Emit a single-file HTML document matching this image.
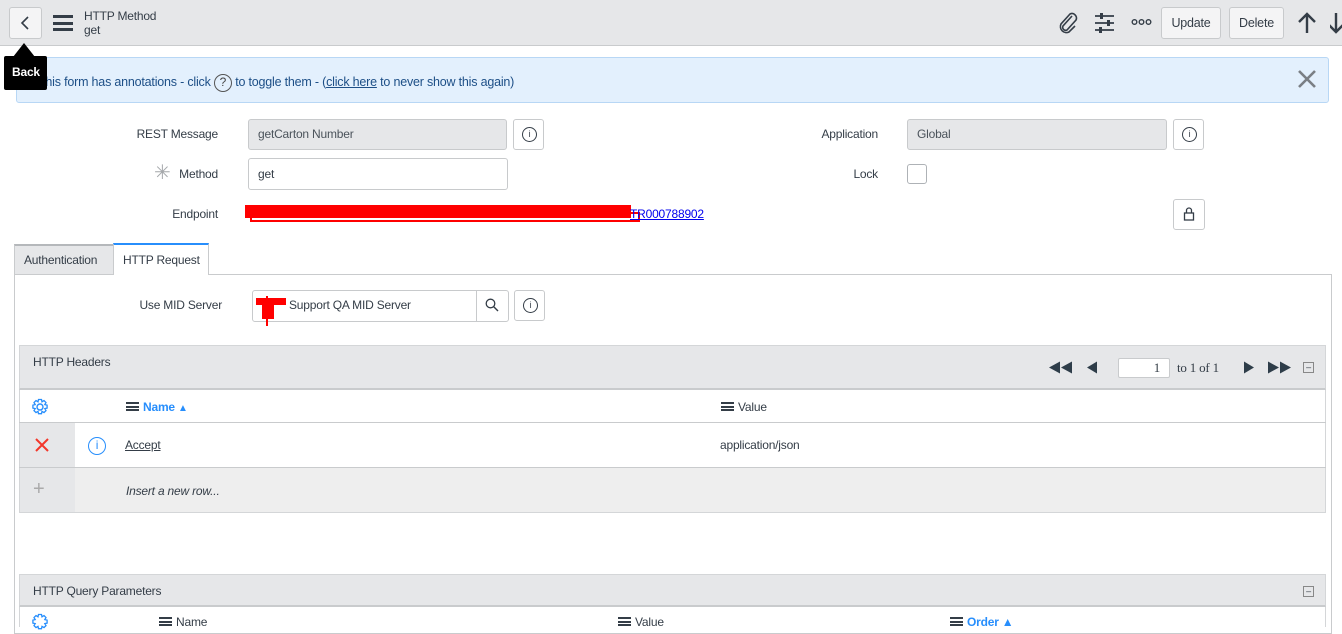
<!DOCTYPE html>
<html><head><meta charset="utf-8">
<style>
*{box-sizing:border-box;margin:0;padding:0}
body{width:1342px;height:622px;overflow:hidden;background:#fff;font-family:"Liberation Sans",sans-serif;font-size:12px;color:#343d47;position:relative;letter-spacing:-0.2px}
.a{position:absolute}
.btn{position:absolute;border:1px solid #c8cacc;border-radius:3px;background:#f4f4f5}
.inp{position:absolute;border:1px solid #c8cacc;border-radius:3px;background:#fff;padding:0 9px;line-height:29px}
.ro{background:#e6e7e9}
.lbl{position:absolute;text-align:right;color:#343d47}
.info{position:absolute;width:31px;height:31px;border:1px solid #c8cacc;border-radius:3px;background:#fff}
.info::after{content:"i";position:absolute;left:8px;top:7px;width:13px;height:13px;border:1px solid #343d47;border-radius:50%;font-size:9px;line-height:12px;text-align:center}
.ham{position:absolute;width:13px;height:9px;border-top:2px solid #343d47;border-bottom:2px solid #343d47}
.ham::after{content:"";position:absolute;left:0;right:0;top:1.5px;height:2px;background:#343d47}
</style></head><body>
<!-- header -->
<div class="a" style="left:0;top:0;width:1342px;height:46px;background:#e6e7e9;border-bottom:1px solid #c9cbcd"></div>
<div class="btn" style="left:9px;top:7px;width:33px;height:32px;background:#f4f4f5"></div>
<svg class="a" style="left:19px;top:15px" width="12" height="16"><path d="M9 2 L3 8 L9 14" stroke="#343d47" stroke-width="1.6" fill="none"/></svg>
<div class="a" style="left:53px;top:15px;width:20px;height:16px;border-top:3px solid #343d47;border-bottom:3px solid #343d47"></div>
<div class="a" style="left:53px;top:21.5px;width:20px;height:3px;background:#343d47"></div>
<div class="a" style="left:84px;top:9px;line-height:14px">HTTP Method<br>get</div>
<svg class="a" style="left:1057px;top:11px" width="22" height="24"><path d="M15 5 L6 15 a3 3 0 0 0 4 4 L19 9 a4.5 4.5 0 0 0 -6 -6 L4 13 a6 6 0 0 0 8 8 l6 -6" stroke="#343d47" stroke-width="1.6" fill="none"/></svg>
<svg class="a" style="left:1094px;top:12px" width="22" height="22"><g stroke="#343d47" stroke-width="1.8"><line x1="1" y1="4" x2="20" y2="4"/><line x1="1" y1="11" x2="20" y2="11"/><line x1="1" y1="18" x2="20" y2="18"/></g><g fill="#343d47"><rect x="6" y="1" width="3" height="6"/><rect x="13" y="8" width="3" height="6"/><rect x="5" y="15" width="3" height="6"/></g></svg>
<svg class="a" style="left:1131px;top:18px" width="22" height="8"><g fill="none" stroke="#343d47" stroke-width="1.4"><circle cx="3.5" cy="4" r="2.3"/><circle cx="10.5" cy="4" r="2.3"/><circle cx="17.5" cy="4" r="2.3"/></g></svg>
<div class="btn" style="left:1161px;top:7px;width:60px;height:32px;text-align:center;line-height:30px;font-size:12.5px">Update</div>
<div class="btn" style="left:1229px;top:7px;width:55px;height:32px;text-align:center;line-height:30px;font-size:12.5px">Delete</div>
<svg class="a" style="left:1297px;top:11px" width="20" height="24"><path d="M10 22 V3 M2 11 L10 3 L18 11" stroke="#343d47" stroke-width="2.4" fill="none"/></svg>
<svg class="a" style="left:1330px;top:11px" width="12" height="24"><path d="M6 2 V21 M-2 13 L6 21 L14 13" stroke="#343d47" stroke-width="2.4" fill="none"/></svg>
<!-- annotation -->
<div class="a" style="left:16px;top:57px;width:1313px;height:46px;background:#e3f0fd;border:1px solid #b8d7f5;border-radius:3px"></div>
<div class="a" style="left:38px;top:74px;color:#1d4f87;font-size:12.5px">This form has annotations - click <span style="display:inline-block;width:18px;height:18px;border:1.5px solid #555;border-radius:50%;text-align:center;line-height:15px;color:#444;font-size:12px">?</span> to toggle them - (<u>click here</u> to never show this again)</div>
<svg class="a" style="left:1297px;top:69px" width="20" height="20"><path d="M2 2 L18 18 M18 2 L2 18" stroke="#7a7f85" stroke-width="2.6"/></svg>
<!-- tooltip -->
<div class="a" style="left:4px;top:56px;width:43px;height:34px;background:#000;border-radius:2px"></div>
<div class="a" style="left:13px;top:43px;width:0;height:0;border-left:11px solid transparent;border-right:11px solid transparent;border-bottom:14px solid #000"></div>
<div class="a" style="left:12px;top:65px;color:#fff;font-weight:bold;font-size:12px">Back</div>
<!-- form -->
<div class="lbl" style="left:100px;width:118px;top:127px">REST Message</div>
<div class="inp ro" style="left:248px;top:119px;width:259px;height:31px;color:#4b535b">getCarton Number</div>
<div class="info" style="left:513px;top:119px"></div>
<div class="lbl" style="left:760px;width:118px;top:127px">Application</div>
<div class="inp ro" style="left:907px;top:119px;width:260px;height:31px;color:#4b535b">Global</div>
<div class="info" style="left:1173px;top:119px"></div>
<div class="a" style="left:154px;top:163px;color:#a5a8ab;font-size:20px;line-height:20px">✳</div>
<div class="lbl" style="left:150px;width:68px;top:167px">Method</div>
<div class="inp" style="left:248px;top:158px;width:260px;height:32px;line-height:31px">get</div>
<div class="lbl" style="left:800px;width:78px;top:167px">Lock</div>
<div class="a" style="left:907px;top:164px;width:20px;height:20px;border:1px solid #aeb2b6;border-radius:3px"></div>
<div class="lbl" style="left:120px;width:98px;top:207px">Endpoint</div>
<div class="a" style="left:245px;top:205px;width:386px;height:13px;background:#f00"></div>
<div class="a" style="left:250px;top:212px;width:390px;height:10px;border:2px solid #f00"></div>
<div class="a" style="left:630px;top:207px;color:#0000ee;text-decoration:underline">TR000788902</div>
<div class="btn" style="left:1173px;top:199px;width:32px;height:31px;background:#fff"></div>
<svg class="a" style="left:1182px;top:206px" width="14" height="16"><rect x="2.5" y="7" width="9" height="7" fill="none" stroke="#343d47" stroke-width="1.3"/><path d="M4.5 7 V4.5 a2.5 2.5 0 0 1 5 0 V7" fill="none" stroke="#343d47" stroke-width="1.3"/></svg>
<!-- tabs -->
<div class="a" style="left:14px;top:274px;width:1318px;height:360px;border:1px solid #c9cbcd"></div>
<div class="a" style="left:14px;top:244px;width:100px;height:31px;background:#e6e7e9;border:1px solid #c9cbcd;border-top:2px solid #b5b8bb;line-height:29px;padding-left:9px">Authentication</div>
<div class="a" style="left:113px;top:243px;width:96px;height:32px;background:#fff;border:1px solid #c9cbcd;border-top:2px solid #278efc;border-bottom:none;line-height:30px;padding-left:9px">HTTP Request</div>
<div class="lbl" style="left:100px;width:122px;top:298px">Use MID Server</div>
<div class="inp" style="left:252px;top:290px;width:225px;height:32px;padding-left:36px;border-radius:3px 0 0 3px">Support QA MID Server</div>
<div class="a" style="left:256px;top:298px;width:30px;height:7px;background:#f00"></div>
<div class="a" style="left:262px;top:303px;width:12px;height:16px;background:#f00"></div>
<div class="a" style="left:266px;top:296px;width:2px;height:30px;background:#f00"></div>
<div class="inp" style="left:476px;top:290px;width:33px;height:32px;border-radius:0 3px 3px 0"></div>
<svg class="a" style="left:485px;top:298px" width="14" height="14"><circle cx="5.5" cy="5.5" r="4.3" fill="none" stroke="#343d47" stroke-width="1.3"/><path d="M8.5 8.5 L13 13" stroke="#343d47" stroke-width="1.4"/></svg>
<div class="info" style="left:514px;top:290px"></div>
<!-- HTTP Headers -->
<div class="a" style="left:19px;top:345px;width:1307px;height:168px;border:1px solid #d4d6d8"></div>
<div class="a" style="left:19px;top:345px;width:1307px;height:45px;background:#e6e7e9;border:1px solid #d4d6d8;border-bottom:2px solid #c9cbcd"></div>
<div class="a" style="left:33px;top:355px">HTTP Headers</div>
<svg class="a" style="left:1048px;top:361px" width="28" height="13"><path d="M1 6.5 L12 0.5 V12.5 Z M13 6.5 L24 0.5 V12.5 Z" fill="#2e3d49"/></svg>
<svg class="a" style="left:1086px;top:361px" width="14" height="13"><path d="M1 6.5 L11 0.5 V12.5 Z" fill="#2e3d49"/></svg>
<div class="a" style="left:1118px;top:358px;width:52px;height:20px;background:#fff;border:1px solid #c9cbcd;border-radius:2px;text-align:right;padding-right:9px;line-height:18px;font-family:'Liberation Serif',serif;font-size:13px">1</div>
<div class="a" style="left:1177px;top:360px;font-family:'Liberation Serif',serif;font-size:13px">to 1 of 1</div>
<svg class="a" style="left:1243px;top:361px" width="14" height="13"><path d="M11 6.5 L1 0.5 V12.5 Z" fill="#2e3d49"/></svg>
<svg class="a" style="left:1267px;top:361px" width="28" height="13"><path d="M12 6.5 L1 0.5 V12.5 Z M24 6.5 L13 0.5 V12.5 Z" fill="#2e3d49"/></svg>
<div class="a" style="left:1303px;top:362px;width:11px;height:11px;border:1px solid #888;font-size:9px;line-height:8px;text-align:center">–</div>
<svg class="a" style="left:31px;top:398px" width="18" height="18"><circle cx="9" cy="9" r="3" fill="none" stroke="#278efc" stroke-width="1.4"/><path d="M7.5 1.5h3l.5 2.3 2-1.2 2 2-1.2 2 2.3.5v3l-2.3.5 1.2 2-2 2-2-1.2-.5 2.3h-3l-.5-2.3-2 1.2-2-2 1.2-2-2.3-.5v-3l2.3-.5-1.2-2 2-2 2 1.2z" fill="none" stroke="#278efc" stroke-width="1.3"/></svg>
<div class="ham" style="left:126px;top:402px"></div>
<div class="a" style="left:143px;top:400px;color:#278efc;font-weight:bold">Name <span style="font-size:10px">▲</span></div>
<div class="ham" style="left:721px;top:402px"></div>
<div class="a" style="left:738px;top:400px">Value</div>
<div class="a" style="left:19px;top:422px;width:1307px;height:1px;background:#c9cbcd"></div>
<div class="a" style="left:20px;top:423px;width:55px;height:45px;background:#e6e7e9"></div>
<svg class="a" style="left:35px;top:438px" width="14" height="14"><path d="M1 1 L13 13 M13 1 L1 13" stroke="#f3372b" stroke-width="2"/></svg>
<div class="a" style="left:88px;top:437px;width:18px;height:18px;border:1.5px solid #278efc;border-radius:50%;color:#278efc;text-align:center;line-height:15px;font-size:12px">i</div>
<div class="a" style="left:125px;top:438px;text-decoration:underline">Accept</div>
<div class="a" style="left:720px;top:438px">application/json</div>
<div class="a" style="left:19px;top:467px;width:1307px;height:1px;background:#c9cbcd"></div>
<div class="a" style="left:20px;top:468px;width:1305px;height:44px;background:#eeeeee"></div>
<div class="a" style="left:20px;top:468px;width:55px;height:44px;background:#e6e7e9"></div>
<div class="a" style="left:33px;top:478px;color:#aaa;font-size:20px">+</div>
<div class="a" style="left:126px;top:484px;font-style:italic">Insert a new row...</div>
<!-- Query params -->
<div class="a" style="left:19px;top:574px;width:1307px;height:33px;background:#e6e7e9;border:1px solid #d4d6d8;border-bottom:2px solid #c9cbcd"></div>
<div class="a" style="left:33px;top:584px">HTTP Query Parameters</div>
<div class="a" style="left:1303px;top:586px;width:11px;height:11px;border:1px solid #888;font-size:9px;line-height:8px;text-align:center">–</div>
<div class="a" style="left:19px;top:607px;width:1307px;height:20px;border-left:1px solid #d4d6d8;border-right:1px solid #d4d6d8"></div>
<svg class="a" style="left:31px;top:613px" width="18" height="18"><path d="M7.5 1.5h3l.5 2.3 2-1.2 2 2-1.2 2 2.3.5v3l-2.3.5 1.2 2-2 2-2-1.2-.5 2.3h-3l-.5-2.3-2 1.2-2-2 1.2-2-2.3-.5v-3l2.3-.5-1.2-2 2-2 2 1.2z" fill="none" stroke="#278efc" stroke-width="1.3"/></svg>
<div class="ham" style="left:159px;top:617px"></div><div class="a" style="left:176px;top:615px">Name</div>
<div class="ham" style="left:618px;top:617px"></div><div class="a" style="left:635px;top:615px">Value</div>
<div class="ham" style="left:950px;top:617px"></div><div class="a" style="left:967px;top:615px;color:#278efc;font-weight:bold">Order ▲</div>
</body></html>
